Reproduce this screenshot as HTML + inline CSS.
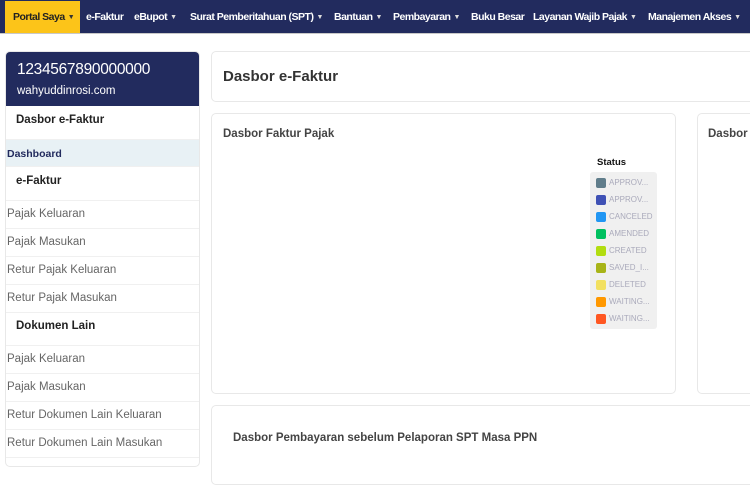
<!DOCTYPE html><html><head><style>
*{margin:0;padding:0;box-sizing:border-box}
body{width:750px;height:469px;overflow:hidden;background:#fff;font-family:"Liberation Sans",sans-serif;position:relative}
.nav{position:absolute;left:0;top:0;width:750px;height:34px;background:#222b5e;border-bottom:1px solid #c8c8c8}
.nav span{position:absolute;top:11px;color:#fff;font-size:10.5px;font-weight:bold;letter-spacing:-0.5px;white-space:nowrap}
.nav i{font-style:normal;font-size:7px;margin-left:3px;color:#ddd;vertical-align:1px}
.py{position:absolute;left:5px;top:1px;width:75px;height:32px;background:#fcc419}
.card{position:absolute;border:1px solid #e8e8e8;border-radius:5px;background:#fff}
.t{position:absolute;white-space:nowrap}
.sb .r{position:absolute;left:0;width:193px;border-bottom:1px solid #f0f0f0}
.lk{font-size:11.5px;color:#666;left:1px}
.hd{font-size:11.5px;font-weight:bold;color:#222;left:10px}
.lg{position:absolute;left:590px;top:172px;width:67px;height:157px;background:#f0f0f0;border-radius:3px;overflow:hidden}
.lg div{position:absolute;left:6px;width:10px;height:10px;border-radius:2px}
.lg span{position:absolute;left:19px;font-size:8px;color:#aab;white-space:nowrap}
</style></head><body>
<div class="nav"><div class="py"></div>
<span style="left:13px;color:#222">Portal Saya<i style="color:#333">▼</i></span>
<span style="left:86px">e-Faktur</span>
<span style="left:134px">eBupot<i>▼</i></span>
<span style="left:190px">Surat Pemberitahuan (SPT)<i>▼</i></span>
<span style="left:334px">Bantuan<i>▼</i></span>
<span style="left:393px">Pembayaran<i>▼</i></span>
<span style="left:471px">Buku Besar</span>
<span style="left:533px">Layanan Wajib Pajak<i>▼</i></span>
<span style="left:648px">Manajemen Akses<i>▼</i></span>
</div>
<div class="card sb" style="left:5px;top:51px;width:195px;height:416px;overflow:hidden">
<div style="position:absolute;left:0;top:0;width:195px;height:54px;background:#222b5e"></div>
<div class="t" style="left:11px;top:9px;color:#fff;font-size:15.5px;letter-spacing:-0.3px">1234567890000000</div>
<div class="t" style="left:11px;top:33px;color:#fff;font-size:11.5px">wahyuddinrosi.com</div>
<div class="r" style="top:54px;height:34px"></div>
<div class="t hd" style="top:62px">Dasbor e-Faktur</div>
<div class="r" style="top:88px;height:27px;background:#e8f1f5"></div>
<div class="t" style="left:1px;top:96px;font-size:10.5px;font-weight:bold;color:#222b5e">Dashboard</div>
<div class="r" style="top:115px;height:34px"></div>
<div class="t hd" style="top:123px">e-Faktur</div>
<div class="r" style="top:149px;height:28px"></div><div class="t lk" style="top:156px">Pajak Keluaran</div>
<div class="r" style="top:177px;height:28px"></div><div class="t lk" style="top:184px">Pajak Masukan</div>
<div class="r" style="top:205px;height:28px"></div><div class="t lk" style="top:212px">Retur Pajak Keluaran</div>
<div class="r" style="top:233px;height:28px"></div><div class="t lk" style="top:240px">Retur Pajak Masukan</div>
<div class="r" style="top:261px;height:33px"></div><div class="t hd" style="top:268px">Dokumen Lain</div>
<div class="r" style="top:294px;height:28px"></div><div class="t lk" style="top:301px">Pajak Keluaran</div>
<div class="r" style="top:322px;height:28px"></div><div class="t lk" style="top:329px">Pajak Masukan</div>
<div class="r" style="top:350px;height:28px"></div><div class="t lk" style="top:357px">Retur Dokumen Lain Keluaran</div>
<div class="r" style="top:378px;height:28px"></div><div class="t lk" style="top:385px">Retur Dokumen Lain Masukan</div>
</div>
<div class="card" style="left:211px;top:51px;width:545px;height:51px"></div>
<div class="t" style="left:223px;top:68px;font-size:15px;font-weight:bold;color:#333">Dasbor e-Faktur</div>
<div class="card" style="left:211px;top:113px;width:465px;height:281px"></div>
<div class="t" style="left:223px;top:128px;font-size:11.5px;font-weight:bold;color:#444">Dasbor Faktur Pajak</div>
<div class="card" style="left:697px;top:113px;width:60px;height:281px"></div>
<div class="t" style="left:708px;top:128px;font-size:11.5px;font-weight:bold;color:#444">Dasbor</div>
<div class="t" style="left:597px;top:157px;font-size:9.5px;font-weight:bold;color:#111">Status</div>
<div class="lg">
<div style="top:6px;background:#607d8b"></div><span style="top:6px">APPROV...</span>
<div style="top:23px;background:#3f51b5"></div><span style="top:23px">APPROV...</span>
<div style="top:40px;background:#2196f3"></div><span style="top:40px">CANCELED</span>
<div style="top:57px;background:#00c060"></div><span style="top:57px">AMENDED</span>
<div style="top:74px;background:#b2dd10"></div><span style="top:74px">CREATED</span>
<div style="top:91px;background:#a8b418"></div><span style="top:91px">SAVED_I...</span>
<div style="top:108px;background:#f2e060"></div><span style="top:108px">DELETED</span>
<div style="top:125px;background:#ff9800"></div><span style="top:125px">WAITING...</span>
<div style="top:142px;background:#ff5722"></div><span style="top:142px">WAITING...</span>
</div>
<div class="card" style="left:211px;top:405px;width:545px;height:80px"></div>
<div class="t" style="left:233px;top:432px;font-size:11.5px;font-weight:bold;color:#444">Dasbor Pembayaran sebelum Pelaporan SPT Masa PPN</div>
</body></html>
